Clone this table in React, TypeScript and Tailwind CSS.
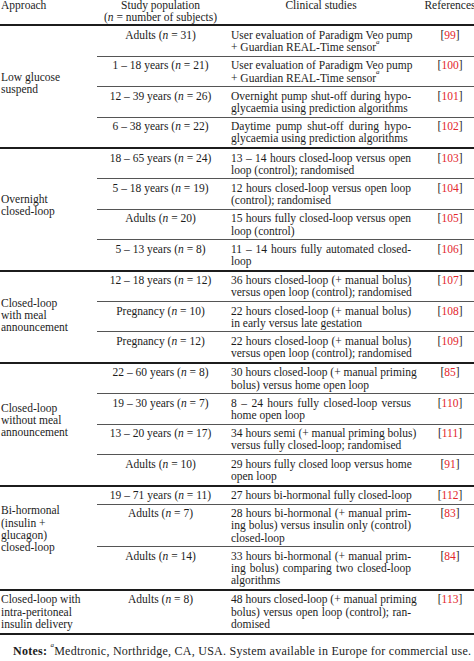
import React from "react"

type Row = { pop: React.ReactNode; lines: React.ReactNode[]; ref: string }
type Group = { label: string[]; pad: string; rows: Row[] }

const N = ({ v }: { v: string }) => (
  <>
    (<i>n</i> = {v})
  </>
)

const Sup = () => <sup className="text-[7px] italic align-[4px] leading-none">a</sup>

const groups: Group[] = [
  {
    label: ["Low glucose", "suspend"],
    pad: "pb-[8px]",
    rows: [
      {
        pop: <>Adults <N v="31" /></>,
        lines: ["User evaluation of Paradigm Veo pump", <>+ Guardian REAL-Time sensor<Sup /></>],
        ref: "99",
      },
      {
        pop: <>1 – 18 years <N v="21" /></>,
        lines: ["User evaluation of Paradigm Veo pump", <>+ Guardian REAL-Time sensor<Sup /></>],
        ref: "100",
      },
      {
        pop: <>12 – 39 years <N v="26" /></>,
        lines: ["Overnight pump shut-off during hypo-", "glycaemia using prediction algorithms"],
        ref: "101",
      },
      {
        pop: <>6 – 38 years <N v="22" /></>,
        lines: ["Daytime pump shut-off during hypo-", "glycaemia using prediction algorithms"],
        ref: "102",
      },
    ],
  },
  {
    label: ["Overnight", "closed-loop"],
    pad: "pb-[8px]",
    rows: [
      {
        pop: <>18 – 65 years <N v="24" /></>,
        lines: ["13 – 14 hours closed-loop versus open", "loop (control); randomised"],
        ref: "103",
      },
      {
        pop: <>5 – 18 years <N v="19" /></>,
        lines: ["12 hours closed-loop versus open loop", "(control); randomised"],
        ref: "104",
      },
      {
        pop: <>Adults <N v="20" /></>,
        lines: ["15 hours fully closed-loop versus open", "loop (control)"],
        ref: "105",
      },
      {
        pop: <>5 – 13 years <N v="8" /></>,
        lines: ["11 – 14 hours fully automated closed-", "loop"],
        ref: "106",
      },
    ],
  },
  {
    label: ["Closed-loop", "with meal", "announcement"],
    pad: "pb-[3px]",
    rows: [
      {
        pop: <>12 – 18 years <N v="12" /></>,
        lines: ["36 hours closed-loop (+ manual bolus)", "versus open loop (control); randomised"],
        ref: "107",
      },
      {
        pop: <>Pregnancy <N v="10" /></>,
        lines: ["22 hours closed-loop (+ manual bolus)", "in early versus late gestation"],
        ref: "108",
      },
      {
        pop: <>Pregnancy <N v="12" /></>,
        lines: ["22 hours closed-loop (+ manual bolus)", "versus open loop (control); randomised"],
        ref: "109",
      },
    ],
  },
  {
    label: ["Closed-loop", "without meal", "announcement"],
    pad: "pb-[8px]",
    rows: [
      {
        pop: <>22 – 60 years <N v="8" /></>,
        lines: ["30 hours closed-loop (+ manual priming", "bolus) versus home open loop"],
        ref: "85",
      },
      {
        pop: <>19 – 30 years <N v="7" /></>,
        lines: ["8 – 24 hours fully closed-loop versus", "home open loop"],
        ref: "110",
      },
      {
        pop: <>13 – 20 years <N v="17" /></>,
        lines: ["34 hours semi (+ manual priming bolus)", "versus fully closed-loop; randomised"],
        ref: "111",
      },
      {
        pop: <>Adults <N v="10" /></>,
        lines: ["29 hours fully closed loop versus home", "open loop"],
        ref: "91",
      },
    ],
  },
  {
    label: ["Bi-hormonal", "(insulin +", "glucagon)", "closed-loop"],
    pad: "pb-[18px]",
    rows: [
      {
        pop: <>19 – 71 years <N v="11" /></>,
        lines: ["27 hours bi-hormonal fully closed-loop"],
        ref: "112",
      },
      {
        pop: <>Adults <N v="7" /></>,
        lines: ["28 hours bi-hormonal (+ manual prim-", "ing bolus) versus insulin only (control)", "closed-loop"],
        ref: "83",
      },
      {
        pop: <>Adults <N v="14" /></>,
        lines: ["33 hours bi-hormonal (+ manual prim-", "ing bolus) comparing two closed-loop", "algorithms"],
        ref: "84",
      },
    ],
  },
  {
    label: ["Closed-loop with", "intra-peritoneal", "insulin delivery"],
    pad: "",
    rows: [
      {
        pop: <>Adults <N v="8" /></>,
        lines: ["48 hours closed-loop (+ manual priming", "bolus) versus open loop (control); ran-", "domised"],
        ref: "113",
      },
    ],
  },
]

export default function App() {
  return (
    <div className="w-[474px] h-[661px] overflow-hidden bg-white text-[#1c1c1c] font-['Liberation_Serif',serif] text-[11.5px] leading-[12.2px]">
      <div className="w-[483px]">
        {/* header */}
        <div className="flex -mt-[1px] pb-[1px] border-b-2 border-[#1c1c1c]">
          <div className="w-[97px] shrink-0 pl-[1px]">Approach</div>
          <div className="w-[127px] shrink-0 text-center">
            <div>Study population</div>
            <div>
              (<i>n</i> = number of subjects)
            </div>
          </div>
          <div className="w-[193px] shrink-0 text-center pl-[7px] pr-[6px]">Clinical studies</div>
          <div className="flex-1 text-center">References</div>
        </div>

        {groups.map((g, gi) => (
          <div key={gi} className={"flex " + (gi ? "border-t-2 border-[#1c1c1c]" : "")}>
            <div className={"w-[97px] shrink-0 flex flex-col justify-center pl-[1px] " + g.pad}>
              {g.label.map((l) => (
                <div key={l} className="whitespace-nowrap">
                  {l}
                </div>
              ))}
            </div>
            <div className="flex-1">
              {g.rows.map((r, ri) => (
                <div key={ri} className={"flex py-[2.5px] " + (ri ? "border-t border-[#555]" : "")}>
                  <div className="w-[127px] shrink-0 text-center whitespace-nowrap">{r.pop}</div>
                  <div className="w-[193px] shrink-0 pl-[7px] pr-[6px]">
                    {r.lines.map((l, li) => (
                      <div
                        key={li}
                        className={
                          "whitespace-nowrap " +
                          (li < r.lines.length - 1 ? "text-justify [text-align-last:justify]" : "")
                        }
                      >
                        {l}
                      </div>
                    ))}
                  </div>
                  <div className="flex-1 text-center">
                    [<span className="text-[#e3262b]">{r.ref}</span>]
                  </div>
                </div>
              ))}
            </div>
          </div>
        ))}
        <div className="border-t-2 border-[#1c1c1c]" />

        <div className="mt-[10px] pl-[13px] text-[12px] tracking-[0.25px] whitespace-nowrap">
          <b>Notes:</b> <Sup />Medtronic, Northridge, CA, USA. System available in Europe for commercial use.
        </div>
      </div>
    </div>
  )
}
